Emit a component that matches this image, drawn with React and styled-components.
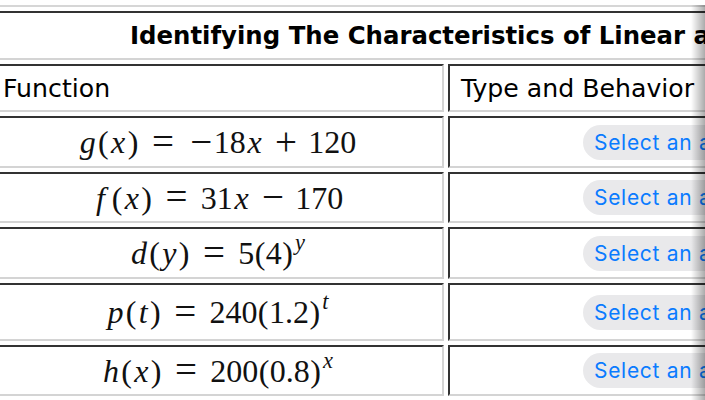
import React from 'react';
import styled, { createGlobalStyle } from 'styled-components';

const Global = createGlobalStyle`
  html, body { margin: 0; padding: 0; background: #fff; }
  body { width: 705px; height: 400px; overflow: hidden; }
`;

const Viewport = styled.div`
  position: relative;
  width: 705px;
  height: 400px;
  overflow: hidden;
  padding-top: 5px;
  box-sizing: border-box;
`;

const EdgeShadow = styled.div`
  position: absolute;
  top: 5px;
  right: 0;
  bottom: 0;
  width: 14px;
  background: linear-gradient(to right, rgba(0, 0, 0, 0), rgba(0, 0, 0, 0.33));
  pointer-events: none;
`;

const Table = styled.table`
  margin-left: -16px;
  table-layout: fixed;
  width: 980px;
  border-collapse: separate;
  border-spacing: 4px;
  border-style: solid;
  border-width: 2px;
  border-color: #d6d6d6 #333 #333 #d6d6d6;
  font-family: "DejaVu Sans", Verdana, sans-serif;
  color: #000;
`;

const Col = styled.col`
  width: ${(p) => p.$w}px;
`;

const Cell = styled.td`
  box-sizing: border-box;
  border-style: solid;
  border-width: 2px;
  border-color: #333 #d4d4d4 #d4d4d4 #333;
  padding: 0 11px;
  height: ${(p) => p.$h}px;
  vertical-align: middle;
`;

const TitleCell = styled(Cell)`
  font-weight: bold;
  font-size: 24.4px;
  text-align: left;
  padding-left: 138px;
  white-space: nowrap;
`;

const HeadCell = styled(Cell)`
  font-size: 25.2px;
  text-align: left;
  white-space: nowrap;
`;

const MathCell = styled(Cell)`
  text-align: center;
  white-space: nowrap;
  font-family: "Liberation Serif", "DejaVu Serif", serif;
  font-size: 32px;
  line-height: 1;
  color: #111;
`;

const PickCell = styled(Cell)`
  text-align: center;
`;

const V = styled.span`
  font-style: italic;
  padding: ${(p) => (p.$f ? '0 0.2em 0 0.16em' : '0 0.06em')};
`;

const Paren = styled.span`
  display: inline-block;
  width: 0.36em;
  text-align: center;
`;

const Op = styled.span`
  display: inline-block;
  font-size: 1.22em;
  line-height: 0;
  vertical-align: -0.05em;
  width: 0.64em;
  text-align: center;
  margin: 0 ${(p) => (p.$rel ? '0.3em' : p.$bin ? '0.25em' : '0 0 0.04em')};
`;

const Sup = styled.sup`
  font-size: 0.7em;
  font-style: italic;
  vertical-align: 0.62em;
  line-height: 0;
  margin-left: 0.08em;
`;

const Pill = styled.span`
  display: inline-flex;
  align-items: center;
  box-sizing: border-box;
  width: 240px;
  height: 35px;
  padding: 0 11px;
  border-radius: 18px;
  background: #e9e9eb;
  color: #0a7bff;
  font-family: Inter, "Liberation Sans", Arial, sans-serif;
  font-size: 21px;
  letter-spacing: 0.7px;
  white-space: nowrap;
  overflow: hidden;
`;

const L = () => <Paren>(</Paren>;
const R = () => <Paren>)</Paren>;

const rows = [
  {
    h: 52,
    math: (
      <>
        <V>g</V><L /><V>x</V><R /><Op $rel>=</Op><Op>−</Op>18<V>x</V><Op $bin>+</Op>120
      </>
    ),
  },
  {
    h: 51,
    math: (
      <>
        <V $f>f</V><L /><V>x</V><R /><Op $rel>=</Op>31<V>x</V><Op $bin>−</Op>170
      </>
    ),
  },
  {
    h: 52,
    math: (
      <>
        <V>d</V><L /><V>y</V><R /><Op $rel>=</Op>5<L />4<R /><Sup>y</Sup>
      </>
    ),
  },
  {
    h: 58,
    math: (
      <>
        <V>p</V><L /><V>t</V><R /><Op $rel>=</Op>240<L />1.2<R /><Sup>t</Sup>
      </>
    ),
  },
  {
    h: 51,
    math: (
      <>
        <V>h</V><L /><V>x</V><R /><Op $rel>=</Op>200<L />0.8<R /><Sup>x</Sup>
      </>
    ),
  },
];

export default function App() {
  return (
    <>
      <Global />
      <Viewport>
        <Table>
          <colgroup>
            <Col $w={454} />
            <Col $w={510} />
          </colgroup>
          <tbody>
            <tr>
              <TitleCell colSpan={2} $h={49}>
                Identifying The Characteristics of Linear and Exponential Functions
              </TitleCell>
            </tr>
            <tr>
              <HeadCell $h={48}>Function</HeadCell>
              <HeadCell $h={48}>Type and Behavior</HeadCell>
            </tr>
            {rows.map((r, i) => (
              <tr key={i}>
                <MathCell $h={r.h}>{r.math}</MathCell>
                <PickCell $h={r.h}>
                  <Pill>Select an answer</Pill>
                </PickCell>
              </tr>
            ))}
          </tbody>
        </Table>
        <EdgeShadow />
      </Viewport>
    </>
  );
}
